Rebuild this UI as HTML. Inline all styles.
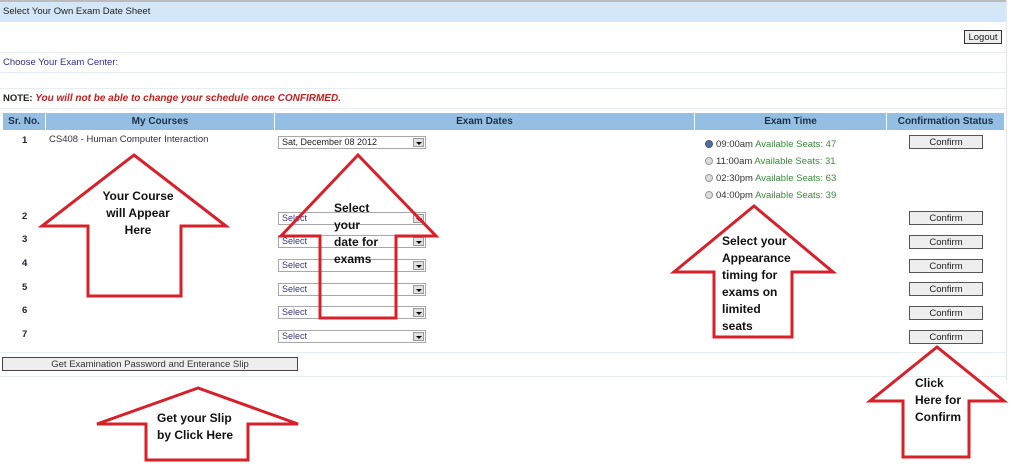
<!DOCTYPE html>
<html><head><style>
*{margin:0;padding:0;box-sizing:border-box}
body{width:1024px;height:465px;background:#fff;font-family:"Liberation Sans",sans-serif;font-size:9px;color:#222;position:relative;overflow:hidden}
.a{position:absolute}
.line{position:absolute;left:0;width:1007px;height:1px;background:#e6eef5}
.th{position:absolute;top:113px;height:17px;background:#95bfe2;font-weight:bold;font-size:10px;color:#1f2f44;text-align:center;line-height:17px}
.sel{position:absolute;left:278px;width:148px;height:13px;border:1px solid #a8a8a8;background:#fff;font-size:9px;color:#3a3a80;line-height:11px;padding-left:3px}
.sel i{position:absolute;right:1px;top:1px;width:11px;height:9px;background:#e0e0e0;border:1px solid #999}
.sel i:after{content:"";position:absolute;left:2px;top:3px;border:3px solid transparent;border-top:3px solid #000;border-bottom:0}
.btn{position:absolute;left:909px;width:74px;height:14px;border:1px solid #555;background:#eee;font-size:9.5px;text-align:center;line-height:13px;color:#222}
.num{position:absolute;left:22px;font-size:9.5px;color:#223;font-weight:bold}
.rad{position:absolute;left:705px;font-size:9.5px;color:#333}
.rad b{display:inline-block;width:8px;height:8px;border-radius:50%;border:1px solid #999;background:#ddd;vertical-align:-1px;margin-right:3px}
.rad span{color:#3c8a3c}
.at{position:absolute;font-family:"Liberation Sans",sans-serif;font-weight:bold;font-size:12px;line-height:17px;color:#111}
</style></head><body>
<div class="a" style="left:0;top:0;width:1007px;height:2px;background:#bbb"></div>
<div class="a" style="left:0;top:2px;width:1007px;height:20px;background:#d4e7f8;font-size:9.5px;line-height:20px;padding-left:3px;color:#222">Select Your Own Exam Date Sheet</div>
<div class="a" style="left:1006px;top:0;width:1px;height:380px;background:#e0e8f0"></div>
<div class="a" style="left:964px;top:30px;width:38px;height:14px;border:1px solid #333;background:#eee;text-align:center;line-height:13px;font-size:9.5px">Logout</div>
<div class="line" style="top:52px"></div>
<div class="a" style="left:3px;top:57px;color:#303090;font-size:9.5px">Choose Your Exam Center:</div>
<div class="line" style="top:72px"></div>
<div class="line" style="top:88px"></div>
<div class="a" style="left:3px;top:93px;font-size:9.5px;font-weight:bold;color:#222">NOTE: <span style="color:#c02020;font-style:italic;font-size:10px">You will not be able to change your schedule once CONFIRMED.</span></div>
<div class="line" style="top:108px"></div>
<div class="th" style="left:3px;width:42px">Sr. No.</div>
<div class="th" style="left:46px;width:228px">My Courses</div>
<div class="th" style="left:275px;width:419px">Exam Dates</div>
<div class="th" style="left:695px;width:191px">Exam Time</div>
<div class="th" style="left:887px;width:117px">Confirmation Status</div>

<div class="num" style="top:135px">1</div>
<div class="a" style="left:49px;top:134px;font-size:9.5px;color:#333">CS408 - Human Computer Interaction</div>
<div class="sel" style="top:136px;color:#222">Sat, December 08 2012<i></i></div>
<div class="rad" style="top:139px"><b style="background:#4a6fa0;border-color:#556"></b>09:00am <span>Available Seats: 47</span></div>
<div class="rad" style="top:156px"><b></b>11:00am <span>Available Seats: 31</span></div>
<div class="rad" style="top:173px"><b></b>02:30pm <span>Available Seats: 63</span></div>
<div class="rad" style="top:190px"><b></b>04:00pm <span>Available Seats: 39</span></div>
<div class="btn" style="top:135px">Confirm</div>

<div class="num" style="top:211px">2</div><div class="sel" style="top:212px">Select<i></i></div><div class="btn" style="top:211px">Confirm</div>
<div class="num" style="top:234px">3</div><div class="sel" style="top:235px">Select<i></i></div><div class="btn" style="top:235px">Confirm</div>
<div class="num" style="top:258px">4</div><div class="sel" style="top:259px">Select<i></i></div><div class="btn" style="top:259px">Confirm</div>
<div class="num" style="top:282px">5</div><div class="sel" style="top:283px">Select<i></i></div><div class="btn" style="top:282px">Confirm</div>
<div class="num" style="top:305px">6</div><div class="sel" style="top:306px">Select<i></i></div><div class="btn" style="top:306px">Confirm</div>
<div class="num" style="top:329px">7</div><div class="sel" style="top:330px">Select<i></i></div><div class="btn" style="top:330px">Confirm</div>
<div class="line" style="top:352px"></div>
<div class="a" style="left:2px;top:357px;width:296px;height:14px;border:1px solid #444;background:#eee;text-align:center;line-height:13px;font-size:9.5px;color:#333">Get Examination Password and Enterance Slip</div>
<div class="line" style="top:376px"></div>

<svg class="a" style="left:0;top:0" width="1024" height="465">
<g fill="none" stroke="#d8202a" stroke-width="3" stroke-linejoin="miter">
<path d="M134 155 L42 226 L88 226 L88 296 L181 296 L181 226 L226 226 Z" fill="#fff"/>
<path d="M358 155 L281 236 L320 236 L320 318 L396 318 L396 236 L436 236 Z"/>
<path d="M754 206 L674 272 L714 272 L714 337 L792 337 L792 272 L833 272 Z" fill="#fff"/>
<path d="M198 388 L97 424 L146 424 L146 460 L248 460 L248 424 L298 424 Z"/>
<path d="M937 347 L870 401 L903 401 L903 457 L969 457 L969 401 L1004 401 Z"/>
</g>
</svg>
<div class="at" style="left:100px;top:188px;width:76px;text-align:center">Your Course will Appear Here</div>
<div class="at" style="left:334px;top:200px">Select<br>your<br>date for<br>exams</div>
<div class="at" style="left:722px;top:233px">Select your<br>Appearance<br>timing for<br>exams on<br>limited<br>seats</div>
<div class="at" style="left:157px;top:410px">Get your Slip<br>by Click Here</div>
<div class="at" style="left:915px;top:375px">Click<br>Here for<br>Confirm</div>
</body></html>
